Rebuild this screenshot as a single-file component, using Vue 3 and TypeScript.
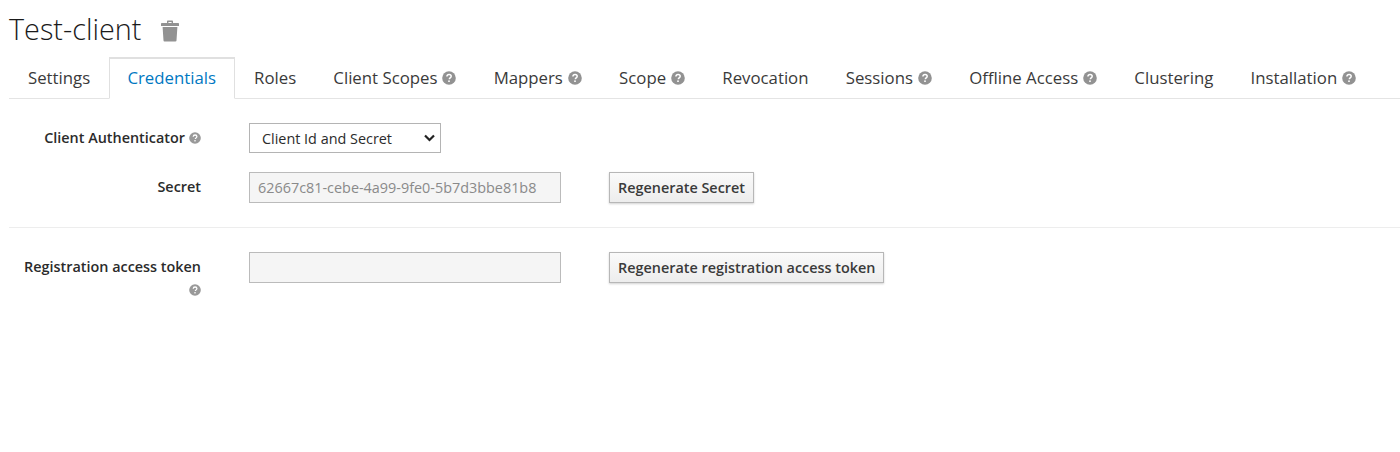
<script setup lang="ts">
interface Tab {
  label: string
  help?: boolean
  active?: boolean
}
const tabs: Tab[] = [
  { label: 'Settings' },
  { label: 'Credentials', active: true },
  { label: 'Roles' },
  { label: 'Client Scopes', help: true },
  { label: 'Mappers', help: true },
  { label: 'Scope', help: true },
  { label: 'Revocation' },
  { label: 'Sessions', help: true },
  { label: 'Offline Access', help: true },
  { label: 'Clustering' },
  { label: 'Installation', help: true },
]
</script>

<template>
  <div class="page">
    <h1 class="title">
      <span>Test-client</span>
      <svg class="trash" viewBox="0 0 18 22" width="18" height="22" aria-hidden="true">
        <path d="M6 3V1.2C6 .8 6.3.5 6.7.5h4.6c.4 0 .7.3.7.7V3h5.3c.4 0 .7.3.7.7V6H0V3.7C0 3.3.3 3 .7 3H6zm1.4 0h3.2V1.9H7.4V3z" fill="#929292" />
        <path d="M1.6 7h14.8l-.9 13.6c0 .5-.4.9-.9.9H3.4c-.5 0-.9-.4-.9-.9L1.6 7z" fill="#929292" />
      </svg>
    </h1>

    <nav class="tabs">
      <a v-for="t in tabs" :key="t.label" class="tab" :class="{ active: t.active }">
        {{ t.label }}
        <svg v-if="t.help" class="help" viewBox="0 0 14 14" width="14" height="14" aria-hidden="true">
          <circle cx="7" cy="7" r="6.8" fill="#929292" />
          <path d="M4.9 5.5c.1-1.3 1-2 2.2-2 1.2 0 2.1.7 2.1 1.8 0 .9-.5 1.3-1.1 1.7-.5.3-.7.6-.7 1.1v.2" fill="none" stroke="#fff" stroke-width="1.5" />
          <rect x="6.2" y="9.4" width="1.6" height="1.6" fill="#fff" />
        </svg>
      </a>
    </nav>

    <section class="form first">
      <label class="label">
        <span>Client Authenticator</span>
        <svg class="help small" viewBox="0 0 14 14" width="12" height="12" aria-hidden="true">
          <circle cx="7" cy="7" r="6.8" fill="#999" />
          <path d="M4.9 5.5c.1-1.3 1-2 2.2-2 1.2 0 2.1.7 2.1 1.8 0 .9-.5 1.3-1.1 1.7-.5.3-.7.6-.7 1.1v.2" fill="none" stroke="#fff" stroke-width="1.5" />
          <rect x="6.2" y="9.4" width="1.6" height="1.6" fill="#fff" />
        </svg>
      </label>
      <div class="select">
        <span>Client Id and Secret</span>
        <svg viewBox="0 0 11 8" width="11" height="8" aria-hidden="true">
          <path d="M1 1.5 5.5 6 10 1.5" fill="none" stroke="#222" stroke-width="2.2" />
        </svg>
      </div>
    </section>

    <section class="form secret">
      <label class="label"><span>Secret</span></label>
      <div class="input">62667c81-cebe-4a99-9fe0-5b7d3bbe81b8</div>
      <button class="btn" type="button">Regenerate Secret</button>
    </section>

    <hr class="rule" />

    <section class="form token">
      <label class="label wrap">
        <span>Registration access token</span>
        <svg class="help small" viewBox="0 0 14 14" width="12" height="12" aria-hidden="true">
          <circle cx="7" cy="7" r="6.8" fill="#999" />
          <path d="M4.9 5.5c.1-1.3 1-2 2.2-2 1.2 0 2.1.7 2.1 1.8 0 .9-.5 1.3-1.1 1.7-.5.3-.7.6-.7 1.1v.2" fill="none" stroke="#fff" stroke-width="1.5" />
          <rect x="6.2" y="9.4" width="1.6" height="1.6" fill="#fff" />
        </svg>
      </label>
      <div class="input"></div>
      <button class="btn" type="button">Regenerate registration access token</button>
    </section>
  </div>
</template>

<style>
html, body { background: #fff; }
</style>

<style scoped>
.page {
  height: 452px;
  box-sizing: border-box;
  padding: 0 0 0 9px;
  overflow: hidden;
  font-family: "Open Sans", sans-serif;
  color: #333;
  background: #fff;
}
.title {
  display: flex;
  align-items: center;
  gap: 20px;
  height: 57px;
  margin: 0;
  font-size: 28.8px;
  font-weight: 300;
  color: #1a1a1a;
}
.trash { margin-top: 4px; }
.tabs {
  display: flex;
  height: 42px;
  box-sizing: border-box;
  border-bottom: 1px solid #e4e4e4;
}
.tab {
  display: flex;
  align-items: center;
  gap: 5px;
  height: 42px;
  box-sizing: border-box;
  padding: 0 18.2px 1px 19px;
  font-size: 16.8px;
  color: #3a3a3a;
  white-space: nowrap;
}
.tab.active {
  color: #0078c2;
  background: #fff;
  border: 1px solid #e0e0e0;
  border-bottom-color: #fff;
  border-top-width: 2px;
  margin-left: 0.8px;
  padding: 0 18px 2px 17.2px;
}
.help { flex: none; }
.form {
  display: grid;
  grid-template-columns: 192px 312px auto;
  column-gap: 48px;
  align-items: start;
  justify-content: start;
  font-size: 14.4px;
}
.first { margin-top: 24px; }
.secret { margin-top: 19px; }
.label {
  display: flex;
  justify-content: flex-end;
  align-items: center;
  flex-wrap: wrap;
  gap: 4px;
  padding-top: 5px;
  font-weight: 600;
  color: #2b2b2b;
  text-align: right;
  line-height: 20px;
}
.label.wrap { row-gap: 7px; }
.select {
  display: flex;
  align-items: center;
  justify-content: space-between;
  width: 192px;
  height: 30px;
  box-sizing: border-box;
  padding: 0 5px 0 12px;
  border: 1px solid #b4b4b4;
  background: #fff;
  color: #2b2b2b;
}
.input {
  height: 31px;
  box-sizing: border-box;
  padding: 0 8px;
  line-height: 29px;
  border: 1px solid #bbb;
  background: #f5f5f5;
  color: #8a8a8a;
  white-space: nowrap;
}
.btn {
  justify-self: start;
  height: 31px;
  padding: 0 7.5px 0 8px;
  font: 600 14.4px "Open Sans", sans-serif;
  color: #3a3a3a;
  background: linear-gradient(#fafafa, #ededed);
  border: 1px solid #b7b7b7;
  box-shadow: 0 1px 2px rgba(0, 0, 0, .18);
  white-space: nowrap;
}
.rule {
  height: 1px;
  margin: 24px 0;
  border: 0;
  background: #ededed;
}
</style>
